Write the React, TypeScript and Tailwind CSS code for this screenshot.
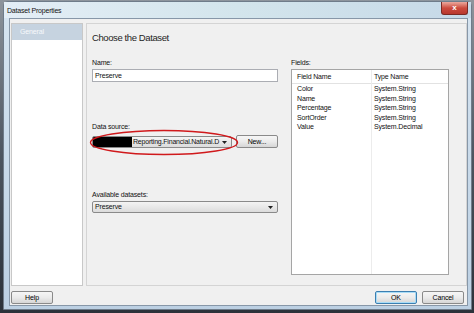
import React from "react";

const fields = [
  ["Color", "System.String"],
  ["Name", "System.String"],
  ["Percentage", "System.String"],
  ["SortOrder", "System.String"],
  ["Value", "System.Decimal"],
];

const Btn = ({ label, primary = false }: { label: string; primary?: boolean }) => (
  <div
    className={`flex h-[13px] w-[42px] items-center justify-center rounded-[2px] border bg-gradient-to-b from-[#f6f6f6] via-[#ebebeb] to-[#d6d6d6] text-[7px] leading-none text-black ${
      primary ? "border-[#3c7fb1] shadow-[inset_0_0_0_1px_#a9dcf6]" : "border-[#8a8a8a]"
    }`}
  >
    {label}
  </div>
);

const Arrow = () => (
  <svg width="5" height="3" viewBox="0 0 5 3" className="shrink-0">
    <path d="M0 0h5L2.5 3z" fill="#222" />
  </svg>
);

export default function App() {
  return (
    <div className="h-[313px] w-[474px] overflow-hidden bg-gradient-to-b from-[#8e959d] via-[#4d5560] to-[#2c323a] pl-[3px] pr-[2px] pt-[1px] font-['Liberation_Sans',Arial,sans-serif] tracking-[-0.15px] text-[#111]">
      <div className="flex h-[309px] flex-col rounded-t-[5px] border border-[#6f7c8a] bg-gradient-to-b from-[#d7e5f1] to-[#bcd0e3]">
        {/* title bar */}
        <div className="relative flex h-[16px] shrink-0 items-center bg-gradient-to-r from-[#e4eef6] via-[#d3e5ec] to-[#c6d9e8] pl-[3px]">
          <span className="text-[7px] leading-none tracking-[-0.2px]">Dataset Properties</span>
          <div className="absolute right-[3px] top-[0px] flex h-[13px] w-[27px] items-center justify-center rounded-b-[3px] border border-t-0 border-[#7a2a25] bg-gradient-to-b from-[#eaa89e] via-[#cc4a3e] to-[#b8382e]">
            <span className="text-[8px] font-bold leading-none text-white">x</span>
          </div>
        </div>

        {/* client */}
        <div className="mb-[3px] ml-[5px] mr-[3px] flex flex-1 flex-col border border-[#8797a8] bg-[#f0f0f0] pt-[4px]">
          <div className="flex flex-1 gap-[3px] pl-[1px]">
            {/* nav */}
            <div className="w-[72px] border border-[#c8c8c8] bg-white">
              <div className="flex h-[16px] items-center bg-[#c6d3e0] pl-[8px] text-[7px] text-[#f7f9fb]">
                General
              </div>
            </div>

            {/* content */}
            <div className="flex flex-1 flex-col border border-[#d4d4d4] pl-[5px]">
              <div className="mt-[7px] h-[14px] text-[9.5px] leading-[14px] tracking-[-0.4px] text-[#1e1e1e]">
                Choose the Dataset
              </div>
              <div className="mt-[13px] flex gap-[13px] text-[7px] leading-[10px]">
                {/* left column */}
                <div className="flex w-[186px] flex-col">
                  <div>Name:</div>
                  <div className="mt-[1px] flex h-[13px] items-center border border-[#abadb3] bg-white pl-[2px]">
                    Preserve
                  </div>

                  <div className="mt-[40px]">Data source:</div>
                  <div className="relative mt-[4px] flex h-[12px] gap-[4px]">
                    <div className="flex w-[141px] items-center overflow-hidden rounded-[2px] border border-[#8a8a8a] bg-gradient-to-b from-[#f4f4f4] to-[#dcdcdc]">
                      <div className="h-full w-[39px] shrink-0 bg-black" />
                      <span className="flex-1 whitespace-nowrap pl-[1px] tracking-[-0.2px]">Reporting.Financial.Natural.D</span>
                      <div className="pr-[4px]">
                        <Arrow />
                      </div>
                    </div>
                    <div className="-mt-[1px]">
                      <Btn label="New..." />
                    </div>
                    <svg
                      className="pointer-events-none absolute -left-[3px] -top-[7px]"
                      width="150"
                      height="27"
                      viewBox="0 0 150 27"
                    >
                      <ellipse cx="75" cy="13.5" rx="73.5" ry="12" fill="none" stroke="#d0191c" strokeWidth="1.4" />
                    </svg>
                  </div>

                  <div className="mt-[42px]">Available datasets:</div>
                  <div className="mt-[1px] flex h-[12px] items-center justify-between rounded-[2px] border border-[#8a8a8a] bg-gradient-to-b from-[#f4f4f4] to-[#dcdcdc] pl-[2px] pr-[4px]">
                    <span>Preserve</span>
                    <Arrow />
                  </div>
                </div>

                {/* right column */}
                <div className="flex w-[158px] flex-col">
                  <div>Fields:</div>
                  <div className="mt-[1px] flex h-[206px] border border-[#a5a5a5] bg-white">
                    <div className="w-[80px] border-r border-[#ececec]">
                      <div className="flex h-[14px] items-center border-b border-[#e2e2e2] pl-[5px]">Field Name</div>
                      {fields.map(([n]) => (
                        <div key={n} className="flex h-[9.5px] items-center pl-[5px] leading-none">
                          {n}
                        </div>
                      ))}
                    </div>
                    <div className="flex-1">
                      <div className="flex h-[14px] items-center border-b border-[#e2e2e2] pl-[2px]">Type Name</div>
                      {fields.map(([n, t]) => (
                        <div key={n} className="flex h-[9.5px] items-center pl-[2px] leading-none">
                          {t}
                        </div>
                      ))}
                    </div>
                  </div>
                </div>
              </div>
            </div>
          </div>

          {/* bottom buttons */}
          <div className="mb-[1px] mt-[5px] flex h-[13px] items-center pl-[1px] pr-[3px]">
            <Btn label="Help" />
            <div className="flex-1" />
            <div className="flex gap-[5px]">
              <Btn label="OK" primary />
              <Btn label="Cancel" />
            </div>
          </div>
        </div>
      </div>
    </div>
  );
}
